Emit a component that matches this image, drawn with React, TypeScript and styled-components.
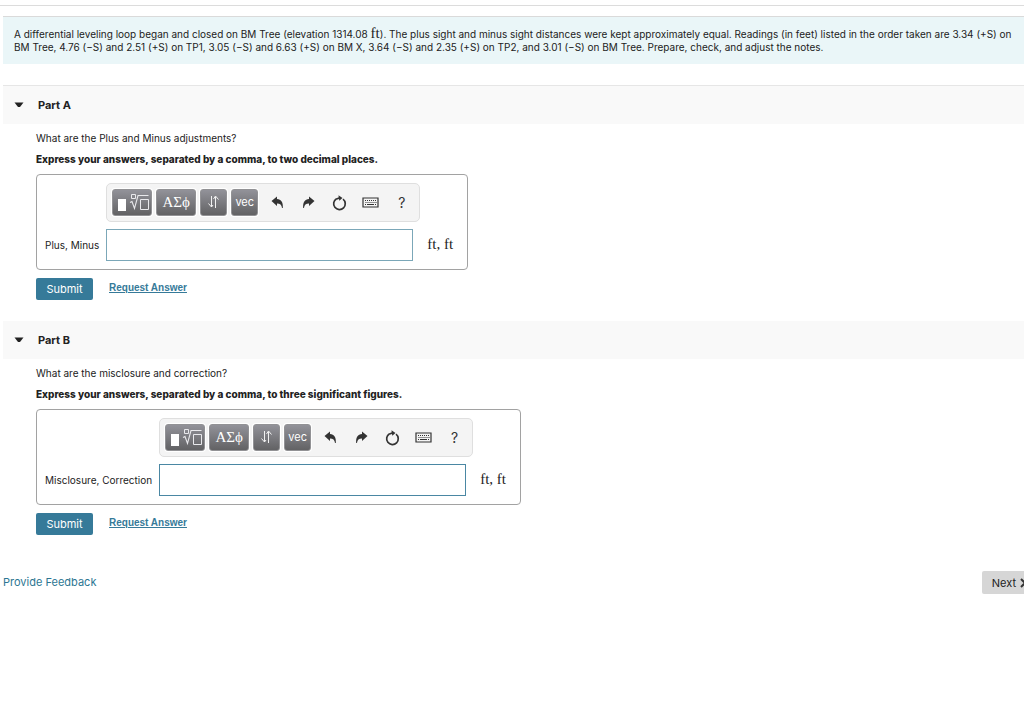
import React, { useId } from 'react';
import styled, { createGlobalStyle } from 'styled-components';

const GlobalStyle = createGlobalStyle`
  *, *::before, *::after { box-sizing: border-box; }
  body {
    margin: 0;
    background: #fff;
    color: #222;
    font: 10px/13px Inter, "Liberation Sans", Arial, sans-serif;
    overflow-x: hidden;
  }
  button, input { font-family: inherit; }
  p, h2 { margin: 0; }
`;

const Page = styled.div`
  margin-top: 5px;
  border-top: 1px solid #dcdcdc;
  padding: 10px 0 0 3px;
`;

const Introduction = styled.section`
  border-top: 1px solid #dadada;
  background: #eaf6f8;
  padding: 10px 10px 10px 11px;
`;

const MathText = styled.span`
  font-family: "Liberation Serif", "Times New Roman", serif;
  font-size: 15px;
  line-height: 12px;
`;

const Parts = styled.main`
  margin-top: 21px;
  border-top: 1px solid #e6e6e6;
`;

const PartHeader = styled.h2`
  font-size: 11px;
  line-height: 38px;
  background: #f9f9f9;
`;

const PartToggle = styled.button`
  display: flex;
  align-items: center;
  gap: 14px;
  width: 100%;
  height: 38px;
  border: 0;
  padding: 0 11px;
  background: none;
  color: inherit;
  font-size: 11px;
  font-weight: bold;
  text-align: left;
`;

const PartBody = styled.div`
  padding: 6px 33px 21px;
`;

const Question = styled.p`
  line-height: 16px;
`;

const Instruction = styled.p`
  margin: 5px 0 7px;
  line-height: 16px;
  font-weight: 800;
`;

const AnswerBox = styled.div`
  display: grid;
  grid-template-columns: auto 307px auto;
  align-items: center;
  gap: 7px;
  width: max-content;
  max-width: 100%;
  border: 1px solid #a2a2a2;
  border-radius: 4px;
  padding: 8px 14px 8px 8px;
`;

const Toolbar = styled.div`
  grid-column: 2 / 4;
  justify-self: start;
  display: flex;
  align-items: center;
  gap: 4px;
  height: 39px;
  border: 1px solid #dfdfdf;
  border-radius: 5px;
  padding: 0 2px 0 5px;
  background: #f4f4f4;
`;

const KeyButton = styled.button<{ $wide?: boolean }>`
  display: flex;
  align-items: center;
  justify-content: center;
  width: ${(p) => (p.$wide ? 40 : 27)}px;
  height: 27px;
  border: 1px solid #929295;
  border-radius: 3px;
  padding: 0 0 2px;
  background: linear-gradient(#929299, #626264);
  box-shadow: 0 0 0 1px #fff;
  color: #fff;
  font-size: 11px;
`;

const IconGroup = styled.div`
  display: flex;
`;

const IconButton = styled.button`
  display: flex;
  align-items: center;
  justify-content: center;
  width: 31px;
  height: 27px;
  border: 0;
  padding: 0;
  background: none;
  color: #333;
  font-size: 14px;
`;

const AnswerLabel = styled.label`
  grid-column: 1;
`;

const AnswerInput = styled.input<{ $strong?: boolean }>`
  width: 100%;
  height: 32px;
  border: 1px solid ${(p) => (p.$strong ? '#4a87a3' : '#7ba7b8')};
  padding: 0 8px;
  background: #fff;
  font-size: 14px;
  outline: none;
`;

const Unit = styled.span`
  padding-left: 7px;
`;

const Actions = styled.div`
  display: flex;
  align-items: center;
  gap: 16px;
  margin-top: 8px;
`;

const SubmitButton = styled.button`
  width: 57px;
  height: 22px;
  border: 0;
  border-radius: 2px;
  padding: 0;
  background: #367a99;
  color: #fff;
  font-size: 11px;
`;

const RequestLink = styled.a`
  padding-bottom: 3px;
  color: #367a99;
  font-family: "Liberation Sans", Arial, sans-serif;
  font-size: 10px;
  font-weight: bold;
`;

const Footer = styled.footer`
  display: flex;
  align-items: center;
  justify-content: space-between;
  padding-top: 15px;
`;

const FeedbackLink = styled.a`
  color: #2c7692;
  font-size: 11px;
  text-decoration: none;
`;

const NextButton = styled.button`
  display: flex;
  align-items: center;
  gap: 4px;
  height: 23px;
  margin-right: -11px;
  border: 0;
  border-radius: 2px;
  padding: 0 8px 0 10px;
  background: #d6d6d6;
  color: #222;
  font-size: 11px;
`;

const TemplateIcon = () => (
  <svg width="38" height="25" viewBox="0 0 38 25" fill="none" stroke="#e9e9ec" aria-hidden="true">
    <path d="M5 10h8v12H5z" fill="#fff" stroke="none" />
    <path d="M18.500 5.500h4v4h-4z" />
    <path d="M17 13.500l2-1 2.500 7 3.500-13h10.500" strokeWidth="1.100" />
    <path d="M27.500 10.500h8v10h-8z" />
  </svg>
);

const ArrowsIcon = () => (
  <svg width="13" height="15" viewBox="0 0 13 15" fill="none" stroke="#f1f1f1" strokeWidth="1" aria-hidden="true">
    <path d="M4.500 2v11M1.500 9.500l3 3.500 1.500-2M8.500 14V2.500M6.500 5l2-3 3 3.500" />
  </svg>
);

const UndoIcon = () => (
  <svg width="13" height="13" viewBox="0 0 13 13" fill="currentColor" aria-hidden="true">
    <path d="M0.500 5 6 0.500v2.600c4.200 .2 6.300 3.400 5.800 8.900h-.8c-.3-3-1.900-4.300-5-4.400v2.400z" />
  </svg>
);

const RedoIcon = () => (
  <svg width="13" height="13" viewBox="0 0 13 13" fill="currentColor" aria-hidden="true">
    <path d="M12.500 5 7 0.500v2.600c-4.200 .2-6.300 3.400-5.800 8.900h.8c.3-3 1.900-4.300 5-4.400v2.400z" />
  </svg>
);

const ResetIcon = () => (
  <svg width="15" height="16" viewBox="0 0 15 16" aria-hidden="true">
    <path d="M11 4.200A5.800 5.800 0 1 1 4.500 3.800" fill="none" stroke="currentColor" strokeWidth="1.700" />
    <path d="M6.500 0.300 10.500 3 7.300 5.800 7 4 4.800 4.800 3.800 3.400 6.700 2.300z" fill="currentColor" />
  </svg>
);

const KeyboardIcon = () => (
  <svg width="17" height="11" viewBox="0 0 17 11" fill="none" stroke="currentColor" aria-hidden="true">
    <path d="M1 1h15v9H1z" strokeWidth="1.200" />
    <path d="M3 3.500h11M3.500 5.500h11" strokeDasharray="1 1" />
    <path d="M3 7.500h1M5 7.500h7M13 7.500h1" />
  </svg>
);

const CaretIcon = () => (
  <svg width="10" height="6" viewBox="0 0 10 6" aria-hidden="true">
    <path d="M0.500 0.500h9L6 5H4z" fill="currentColor" />
  </svg>
);

const ChevronIcon = () => (
  <svg width="7" height="10" viewBox="0 0 7 10" aria-hidden="true">
    <path d="M1 1l4 4-4 4" fill="none" stroke="#333" strokeWidth="2" />
  </svg>
);

const MathToolbar = () => (
  <Toolbar role="toolbar" aria-label="Math tools">
    <KeyButton type="button" $wide aria-label="Templates"><TemplateIcon /></KeyButton>
    <KeyButton type="button" $wide aria-label="Symbols"><MathText>ΑΣϕ</MathText></KeyButton>
    <KeyButton type="button" aria-label="Sub and superscript"><ArrowsIcon /></KeyButton>
    <KeyButton type="button">vec</KeyButton>
    <IconGroup>
      <IconButton type="button" aria-label="Undo"><UndoIcon /></IconButton>
      <IconButton type="button" aria-label="Redo"><RedoIcon /></IconButton>
      <IconButton type="button" aria-label="Reset"><ResetIcon /></IconButton>
      <IconButton type="button" aria-label="Keyboard shortcuts"><KeyboardIcon /></IconButton>
      <IconButton type="button" aria-label="Help">?</IconButton>
    </IconGroup>
  </Toolbar>
);

interface PartProps {
  title: string;
  question: string;
  instruction: string;
  label: string;
  strong?: boolean;
}

const Part = ({ title, question, instruction, label, strong }: PartProps) => {
  const id = useId();
  return (
    <section>
      <PartHeader>
        <PartToggle type="button" aria-expanded="true"><CaretIcon />{title}</PartToggle>
      </PartHeader>
      <PartBody>
        <Question>{question}</Question>
        <Instruction>{instruction}</Instruction>
        <AnswerBox>
          <MathToolbar />
          <AnswerLabel htmlFor={id}>{label}</AnswerLabel>
          <AnswerInput id={id} type="text" $strong={strong} />
          <Unit><MathText>ft, ft</MathText></Unit>
        </AnswerBox>
        <Actions>
          <SubmitButton type="button">Submit</SubmitButton>
          <RequestLink href="#request">Request Answer</RequestLink>
        </Actions>
      </PartBody>
    </section>
  );
};

export default function App() {
  return (
    <>
      <GlobalStyle />
      <Page>
        <Introduction>
          <p>
            A differential leveling loop began and closed on BM Tree (elevation 1314.08 <MathText>ft</MathText>). The
            plus sight and minus sight distances were kept approximately equal. Readings (in feet) listed in the order
            taken are 3.34 (+S) on BM Tree, 4.76 (−S) and 2.51 (+S) on TP1, 3.05 (−S) and 6.63 (+S) on BM X, 3.64 (−S)
            and 2.35 (+S) on TP2, and 3.01 (−S) on BM Tree. Prepare, check, and adjust the notes.
          </p>
        </Introduction>
        <Parts>
          <Part
            title="Part A"
            question="What are the Plus and Minus adjustments?"
            instruction="Express your answers, separated by a comma, to two decimal places."
            label="Plus, Minus"
          />
          <Part
            title="Part B"
            question="What are the misclosure and correction?"
            instruction="Express your answers, separated by a comma, to three significant figures."
            label="Misclosure, Correction"
            strong
          />
        </Parts>
        <Footer>
          <FeedbackLink href="#feedback">Provide Feedback</FeedbackLink>
          <NextButton type="button">Next<ChevronIcon /></NextButton>
        </Footer>
      </Page>
    </>
  );
}
